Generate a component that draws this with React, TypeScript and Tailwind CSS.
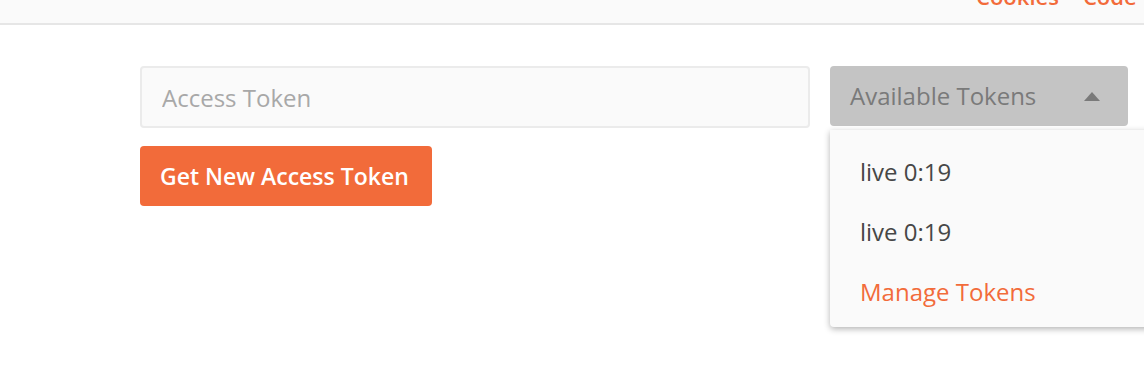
import React from 'react';

const FONT = { fontFamily: '"Open Sans", "Noto Sans", sans-serif' };

export default function App() {
  return (
    <div className="w-[1144px] h-[392px] bg-white overflow-hidden relative" style={FONT}>
      <div className="h-[25px] bg-[#fafafa] border-b-2 border-[#e6e6e6] flex justify-start overflow-hidden">
        <div className="flex gap-[24px] pl-[976px] mt-[-15px] text-[22px] leading-[22px] font-semibold text-[#f26b3a] whitespace-nowrap">
          <span>Cookies</span>
          <span>Code</span>
        </div>
      </div>

      <div className="flex gap-[20px] pl-[140px] pt-[41px]">
        <div className="flex flex-col gap-[18px]">
          <input
            type="text"
            placeholder="Access Token"
            className="w-[670px] h-[62px] bg-[#fafafa] border-2 border-[#ebebeb] rounded-[4px] px-[20px] text-[24px] text-[#474747] placeholder:text-[#a8a8a8] focus:outline-none"
          />
          <button className="w-[292px] h-[60px] bg-[#f26b3a] rounded-[4px] text-white text-[23px] font-semibold text-left pl-[20px]">
            Get New Access Token
          </button>
        </div>

        <div className="relative">
          <button className="w-[298px] h-[60px] bg-[#c4c4c4] rounded-[4px] flex items-center justify-between pl-[20px] pr-[28px] text-[24px] text-[#7a7a7a]">
            <span>Available Tokens</span>
            <svg width="16" height="9" viewBox="0 0 16 9">
              <polygon points="8,0 16,9 0,9" fill="#7a7a7a" />
            </svg>
          </button>
          <div className="absolute left-0 top-[64px] w-[330px] bg-[#fafafa] rounded-b-[4px] shadow-[0_2px_6px_rgba(0,0,0,0.3)] pt-[12px] pb-[5px]">
            <div className="h-[60px] flex items-center pl-[30px] text-[24px] text-[#474747]">live 0:19</div>
            <div className="h-[60px] flex items-center pl-[30px] text-[24px] text-[#474747]">live 0:19</div>
            <div className="h-[60px] flex items-center pl-[30px] text-[24px] text-[#f26b3a]">Manage Tokens</div>
          </div>
        </div>
      </div>
    </div>
  );
}
